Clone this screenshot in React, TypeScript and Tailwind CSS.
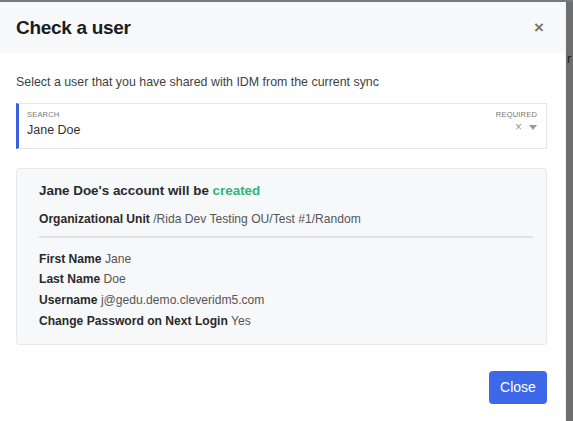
import React from 'react'

const font = { fontFamily: '"Liberation Sans", Arial, sans-serif' }

function Row({ label, value }: { label: string; value: string }) {
  return (
    <div className="text-[12.1px] leading-[20.7px] text-[#333]">
      <span className="font-bold text-[#2a2a2a]">{label}</span> <span className="text-[#555]">{value}</span>
    </div>
  )
}

export default function App() {
  return (
    <div style={font} className="w-[573px] h-[421px] bg-[#6e6e6e] overflow-hidden flex flex-col">
      <div className="h-[2px] bg-[#7a7a7a] shrink-0" />
      <div className="flex flex-1 min-h-0">
        <div className="w-[566px] bg-white border-r border-[#f2f2f2] flex flex-col">
          {/* header */}
          <div className="h-[51px] bg-[#f8f9fb] flex items-center justify-between pl-4 pr-[21px] shrink-0">
            <h1 className="text-[19px] font-bold text-[#1c1c1e] tracking-[-0.3px] mt-[1px]">Check a user</h1>
            <span className="text-[#777] text-[17px] font-bold leading-none">×</span>
          </div>

          {/* body */}
          <div className="px-4 pt-[20px]">
            <p className="text-[12.4px] text-[#3f3f3f] leading-[18px]">
              Select a user that you have shared with IDM from the current sync
            </p>

            {/* search field */}
            <div className="mt-[12px] h-[46px] w-[531px] border border-[#e3e6ec] border-l-[3px] border-l-[#3d5ee1] flex justify-between pl-[8px] pr-[9px] pt-[6px]">
              <div className="flex flex-col">
                <span className="text-[7.5px] uppercase text-[#777] tracking-[0.2px] leading-[10px]">Search</span>
                <span className="text-[12.5px] text-[#333] leading-[18px] mt-[1px]">Jane Doe</span>
              </div>
              <div className="flex flex-col items-end">
                <span className="text-[7.5px] uppercase text-[#777] tracking-[0.2px] leading-[10px]">Required</span>
                <div className="flex items-center gap-[7px] mt-[1px] text-[#999]">
                  <span className="text-[12px] leading-[12px]">×</span>
                  <svg width="8" height="5" viewBox="0 0 8 5"><path d="M0 0h8L4 5z" fill="#999" /></svg>
                </div>
              </div>
            </div>

            {/* preview card */}
            <div className="mt-[19px] w-[531px] h-[177px] bg-[#f7f8fa] border border-[#e6e8ec] rounded-[3px] pl-[22px] pr-[13px] pt-[12px]">
              <div className="text-[13.4px] font-bold text-[#2a2a2a] leading-[20px]">
                Jane Doe's account will be <span className="text-[#2fb57a]">created</span>
              </div>
              <div className="mt-[8px]">
                <Row label="Organizational Unit" value="/Rida Dev Testing OU/Test #1/Random" />
              </div>
              <div className="h-[2px] bg-[#dfe2e6] mt-[6px] mb-[11px]" />
              <Row label="First Name" value="Jane" />
              <Row label="Last Name" value="Doe" />
              <Row label="Username" value="j@gedu.demo.cleveridm5.com" />
              <Row label="Change Password on Next Login" value="Yes" />
            </div>

            <div className="flex justify-end w-[531px] mt-[26px]">
              <button className="w-[58px] h-[33px] bg-[#3e68ea] text-white text-[14px] rounded-[4px]">Close</button>
            </div>
          </div>
        </div>
        <div className="flex-1 pt-[47px] pl-[1px] text-[13px] text-[#222]">r</div>
      </div>
    </div>
  )
}
